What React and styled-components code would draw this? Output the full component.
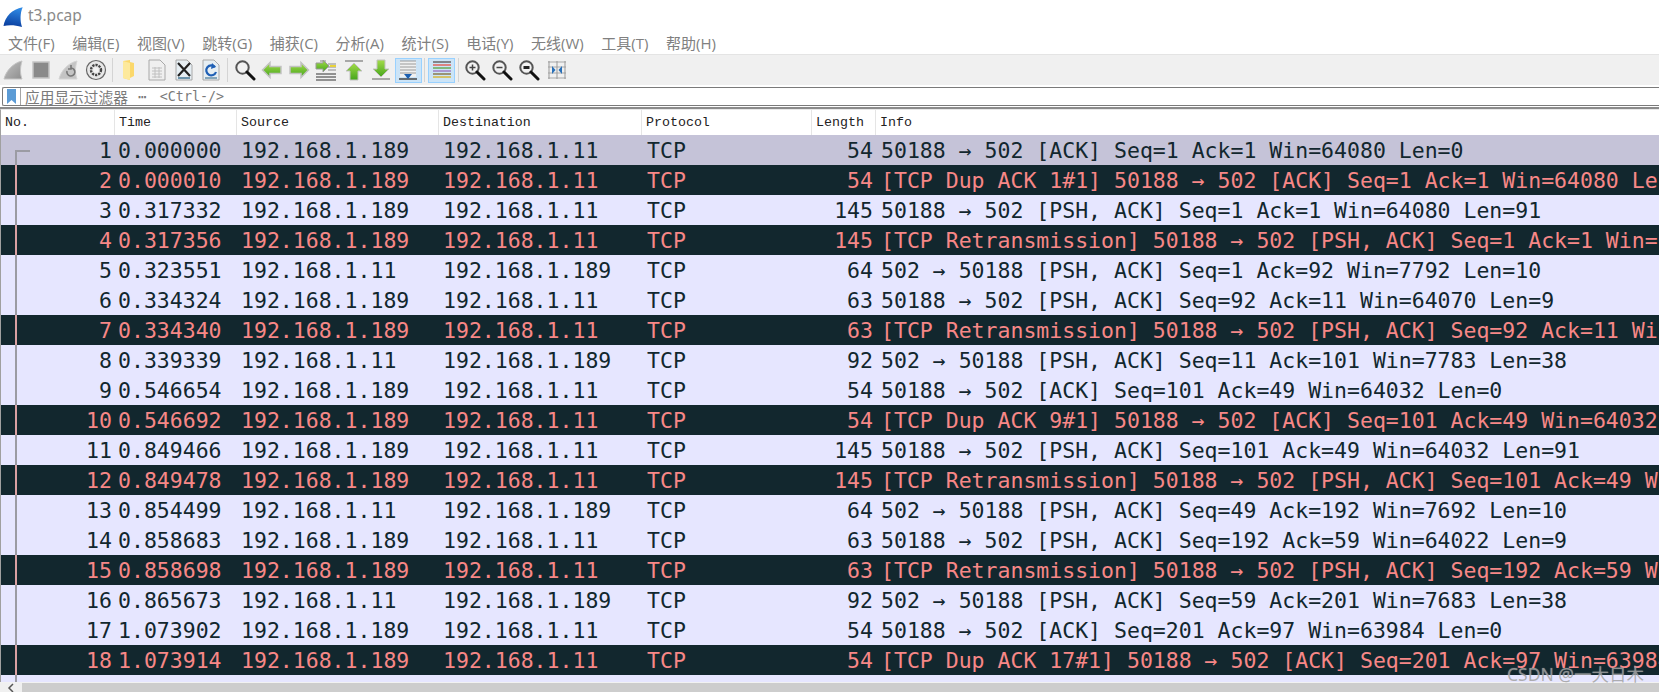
import React from 'react';
import styled, { createGlobalStyle } from 'styled-components';

const GlobalStyle = createGlobalStyle`
  html, body {
    margin: 0;
    height: 100%;
    overflow: hidden;
    background: #fff;
  }
  #root {
    height: 100%;
  }
`;

const Window = styled.div`
  height: 692px;
  display: flex;
  flex-direction: column;
  overflow: hidden;
  font-family: 'Noto Sans', 'Noto Sans CJK SC', sans-serif;
`;
const TitleBar = styled.div`
  height: 30px;
  box-sizing: border-box;
  padding: 0 0 1px 1px;
  display: flex;
  align-items: center;
  gap: 3px;
  font-size: 15.5px;
  color: #8a8a8a;
`;
const MenuBar = styled.div`
  height: 25px;
  box-sizing: border-box;
  display: flex;
  align-items: center;
  gap: 17.6px;
  padding-left: 8px;
  font-size: 15px;
  color: #808080;
  font-family: 'Open Sans', 'Noto Sans CJK SC', sans-serif;
  border-bottom: 1px solid #e4e4e4;
`;
const Toolbar = styled.div`
  height: 30px;
  box-sizing: border-box;
  display: flex;
  align-items: center;
  padding-left: 0.5px;
  background: #f0f0f0;
`;
const ToolButton = styled.div`
  width: 27.3px;
  height: 25px;
  box-sizing: border-box;
  flex: none;
  display: flex;
  align-items: center;
  justify-content: center;
  background: ${(p) => (p.$active ? '#cce4f7' : 'transparent')};
  border: 1px solid ${(p) => (p.$active ? '#99d1ff' : 'transparent')};
`;
const ToolSeparator = styled.div`
  width: 6px;
  height: 24px;
  flex: none;
  display: flex;
  justify-content: center;

  &::before {
    content: '';
    width: 1px;
    background: #d4d4d4;
  }
`;
const FilterBar = styled.div`
  height: 24px;
  box-sizing: border-box;
  padding: 2px 0 1px 2px;
  border-bottom: 2px solid #8b8b8b;
  display: flex;
`;
const FilterInput = styled.div`
  flex: 1;
  display: flex;
  align-items: center;
  border: 1px solid #7a7a7a;
  border-right: none;
  border-radius: 2px 0 0 2px;
  background: #fff;
`;
const FilterFlag = styled.div`
  width: 17px;
  height: 100%;
  display: flex;
  align-items: center;
  justify-content: center;
  border-right: 1px solid #a5a5a5;
`;
const FilterText = styled.div`
  display: flex;
  align-items: center;
  padding-left: 4px;
  font-family: 'DejaVu Sans Mono', 'Noto Sans CJK SC', monospace;
  font-size: 13.3px;
  color: #7a7a7a;
  white-space: pre;
`;
const FilterHint = styled.span`
  font-family: 'Noto Sans CJK SC', sans-serif;
  font-size: 14.7px;
  margin-right: 10px;
`;
const FilterDots = styled.span`
  font-size: 15px;
  margin-right: 13px;
`;
const TableArea = styled.div`
  flex: 1;
  min-height: 0;
  overflow: hidden;
  border-left: 1px solid #a0a0a0;
  border-top: 1px solid #e8e8e8;
`;
const COLUMNS = '114px 122px 202px 203px 170px 64px 1fr';
const HeaderRow = styled.div`
  height: 25px;
  display: grid;
  grid-template-columns: ${COLUMNS};
  background: #fff;
`;
const HeaderCell = styled.div`
  display: flex;
  align-items: center;
  padding-left: 4px;
  font-family: 'Liberation Mono', monospace;
  font-size: 13.3px;
  color: #222;
  border-right: 1px solid #e5e5e5;
  white-space: pre;

  &:last-child {
    border-right: none;
  }
`;
const PacketRow = styled.div`
  height: 30px;
  display: grid;
  grid-template-columns: ${COLUMNS};
  align-items: start;
  background: ${(p) => (p.$kind === 'bad' ? '#12272e' : p.$kind === 'selected' ? '#c5c3d8' : '#e6e6ff')};
  color: ${(p) => (p.$kind === 'bad' ? '#f78787' : '#12272e')};
  font-family: 'DejaVu Sans Mono', monospace;
  font-size: 21.5px;
  line-height: 32px;
  white-space: pre;
`;
const Cell = styled.div`
  min-width: 0;
  overflow: hidden;
  padding-left: ${(p) => p.$pad ?? 3}px;
  padding-right: ${(p) => p.$padRight ?? 0}px;
  text-align: ${(p) => p.$align || 'left'};
`;
const NumberCell = styled(Cell)`
  position: relative;
  height: 30px;
  overflow: visible;
`;
const TreeLine = styled.span`
  position: absolute;
  left: 14px;
  top: ${(p) => (p.$first ? '15px' : '0')};
  bottom: 0;
  width: 2px;
  background: ${(p) => (p.$bad ? '#d9a0a2' : '#9b9ba3')};
`;
const TreeCorner = styled.span`
  position: absolute;
  left: 14px;
  top: 15px;
  width: 15px;
  height: 2px;
  background: #9b9ba3;
`;
const ScrollBar = styled.div`
  height: 10px;
  flex: none;
  display: flex;
  background: #cdcdcd;
  border-top: 1px solid #f2f2f2;
  box-sizing: border-box;
`;
const ScrollArrow = styled.div`
  width: 22px;
  background: #f0f0f0;
  display: flex;
  align-items: flex-start;
  justify-content: center;
`;
const Watermark = styled.div`
  position: absolute;
  left: 1507px;
  top: 661px;
  font-family: 'Noto Sans', 'Noto Sans CJK SC', sans-serif;
  font-size: 17.5px;
  color: rgba(150, 150, 150, 0.75);
  text-shadow: 0 0 1px rgba(255, 255, 255, 0.5);
  white-space: pre;
`;

const Fin = ({ size = 24, id, top, bottom }) => (
  <svg width={size} height={size} viewBox="0 0 24 24">
    <defs>
      <linearGradient id={id} x1="0.6" y1="0" x2="0.4" y2="1">
        <stop offset="0" stopColor={top} />
        <stop offset="1" stopColor={bottom} />
      </linearGradient>
    </defs>
    <path d="M2.5 23C4 14 11 6 21.7 4.3C19 10 19 18 21 24C14 22 8 22 2.5 23Z" fill={`url(#${id})`} />
  </svg>
);

const Icon = ({ children }) => (
  <svg width="22" height="22" viewBox="0 0 22 22">
    {children}
  </svg>
);

const GreenFill = () => (
  <defs>
    <linearGradient id="green" x1="0" y1="0" x2="0" y2="1">
      <stop offset="0" stopColor="#a4dc4a" />
      <stop offset="1" stopColor="#45a51c" />
    </linearGradient>
  </defs>
);

const GrayFin = () => (
  <Icon>
    <defs>
      <linearGradient id="grayFin" x1="0" y1="0" x2="1" y2="1">
        <stop offset="0" stopColor="#c2c2c2" />
        <stop offset="1" stopColor="#8e8e8e" />
      </linearGradient>
    </defs>
    <path d="M1 20C3 12 10 4 19 2C17 8 17 15 19 20Z" fill="url(#grayFin)" stroke="#c4c4c4" />
  </Icon>
);
const StopIcon = () => (
  <Icon>
    <rect x="3" y="3" width="16" height="16" fill="#8a8a8a" stroke="#c4c4c4" strokeWidth="1.5" />
  </Icon>
);
const RestartIcon = () => (
  <Icon>
    <path d="M1 20C3 12 10 4 19 2C17 8 17 15 19 20Z" fill="#c4c4c4" stroke="#d4d4d4" />
    <path d="M9 12a4 4 0 1 0 4 -3M13 6v4h-3" fill="none" stroke="#777" strokeWidth="1.6" />
  </Icon>
);
const OptionsIcon = () => (
  <Icon>
    <circle cx="11" cy="11" r="9.5" fill="#e8e8e8" stroke="#666" strokeWidth="1.2" />
    <circle cx="11" cy="11" r="5" fill="none" stroke="#444" strokeWidth="2.4" strokeDasharray="2.2 1" />
    <circle cx="11" cy="11" r="2.6" fill="#f4f4f4" />
  </Icon>
);
const FolderIcon = () => (
  <Icon>
    <path d="M5 2L12 1V3L16 4V17L12 19V21L5 19Z" fill="#fbd86b" />
    <path d="M5 2L12 4V21L5 19Z" fill="#fde99c" />
  </Icon>
);
const PageShape = ({ fill = '#f5f5f5' }) => (
  <path d="M3 1H14L19 6V21H3Z" fill={fill} stroke="#a8a8a8" />
);
const FileIcon = () => (
  <Icon>
    <PageShape fill="#efefef" />
    <path d="M6 9H16M6 12H16M6 15H16M6 18H16M9 8V19M13 8V19" stroke="#c0c0c0" />
  </Icon>
);
const CloseIcon = () => (
  <Icon>
    <PageShape fill="#e6eef3" />
    <path d="M5 4L17 17M17 4L5 17" stroke="#222" strokeWidth="2.2" />
    <path d="M5 19H17" stroke="#6d94ac" strokeWidth="2" />
  </Icon>
);
const ReloadIcon = () => (
  <Icon>
    <PageShape fill="#e6eef3" />
    <path d="M15 8A5 5 0 1 0 16 13" fill="none" stroke="#1e5fb5" strokeWidth="2.2" />
    <path d="M12 4L16 8L11 10Z" fill="#1e5fb5" />
    <path d="M5 19H17" stroke="#6d94ac" strokeWidth="1.6" />
  </Icon>
);
const Magnifier = ({ children, r = 6.2 }) => (
  <Icon>
    <circle cx="8.5" cy="8.5" r={r} fill="#f2f2f2" stroke="#555" strokeWidth="2" />
    <path d="M13 13L20 20" stroke="#111" strokeWidth="3" strokeLinecap="round" />
    {children}
  </Icon>
);
const ArrowLeft = () => (
  <Icon>
    <GreenFill />
    <path d="M1.5 11L9 3.5V7.5H20V14.5H9V18.5Z" fill="url(#green)" stroke="#c2c2c2" strokeWidth="1.5" />
  </Icon>
);
const ArrowRight = () => (
  <Icon>
    <GreenFill />
    <path d="M20.5 11L13 3.5V7.5H2V14.5H13V18.5Z" fill="url(#green)" stroke="#c2c2c2" strokeWidth="1.5" />
  </Icon>
);
const GotoIcon = () => (
  <Icon>
    <GreenFill />
    <path d="M1 15H21M1 18H21M1 21H21" stroke="#333" />
    <path d="M11 2L5 2M13 5H21M13 8H21M13 11H21" stroke="#8a8a8a" />
    <path d="M14 7L8 1V4H1V10H8V13Z" fill="url(#green)" stroke="#9a9a9a" />
    <path d="M15 7H21" stroke="#e8d23a" strokeWidth="2" />
  </Icon>
);
const TopIcon = () => (
  <Icon>
    <GreenFill />
    <path d="M2 2H20" stroke="#a8a8a8" strokeWidth="2" />
    <path d="M11 4L19 12H15V21H7V12H3Z" fill="url(#green)" stroke="#c2c2c2" />
  </Icon>
);
const BottomIcon = () => (
  <Icon>
    <GreenFill />
    <path d="M2 20H20" stroke="#a8a8a8" strokeWidth="2" />
    <path d="M11 18L19 10H15V1H7V10H3Z" fill="url(#green)" stroke="#c2c2c2" />
  </Icon>
);
const AutoScrollIcon = () => (
  <Icon>
    <path d="M3 2H19V18H3Z" fill="#f0f0f0" />
    <path d="M3 2H19M3 5H19M3 8H19M3 11H19M3 14H19" stroke="#9a9a9a" />
    <path d="M2 20H20" stroke="#444" strokeWidth="1.5" />
    <path d="M7 15H15L11 20Z" fill="#1c5fb0" />
  </Icon>
);
const ColorizeIcon = () => (
  <Icon>
    <path d="M2 3H20" stroke="#666" strokeWidth="1.5" />
    <path d="M2 6H20" stroke="#e0635a" strokeWidth="1.5" />
    <path d="M2 9H20" stroke="#6aaa56" strokeWidth="1.5" />
    <path d="M2 12H20" stroke="#9f7fc5" strokeWidth="1.5" />
    <path d="M2 15H20" stroke="#8a7a4c" strokeWidth="1.5" />
    <path d="M2 18H20" stroke="#d9b73c" strokeWidth="1.5" />
  </Icon>
);
const ResizeIcon = () => (
  <Icon>
    <path d="M2 3H20M2 19H20M2 8H20M2 14H20" stroke="#a8a8a8" />
    <path d="M3 2V20M19 2V20M11 2V20" stroke="#999" />
    <path d="M9.5 11L6 7V15ZM12.5 11L16 7V15Z" fill="#2a70b8" />
  </Icon>
);
const FlagIcon = () => (
  <svg width="11" height="15" viewBox="0 0 11 15">
    <path d="M1 0H10V15L5.5 11L1 15Z" fill="#5b9bd5" />
  </svg>
);

const MENUS = ['文件(F)', '编辑(E)', '视图(V)', '跳转(G)', '捕获(C)', '分析(A)', '统计(S)', '电话(Y)', '无线(W)', '工具(T)', '帮助(H)'];

const SRC = '192.168.1.189';
const DST = '192.168.1.11';
const PACKETS = [
  [1, '0.000000', SRC, DST, 54, '50188 → 502 [ACK] Seq=1 Ack=1 Win=64080 Len=0', 'selected'],
  [2, '0.000010', SRC, DST, 54, '[TCP Dup ACK 1#1] 50188 → 502 [ACK] Seq=1 Ack=1 Win=64080 Len=0', 'bad'],
  [3, '0.317332', SRC, DST, 145, '50188 → 502 [PSH, ACK] Seq=1 Ack=1 Win=64080 Len=91'],
  [4, '0.317356', SRC, DST, 145, '[TCP Retransmission] 50188 → 502 [PSH, ACK] Seq=1 Ack=1 Win=64080 Len=91', 'bad'],
  [5, '0.323551', DST, SRC, 64, '502 → 50188 [PSH, ACK] Seq=1 Ack=92 Win=7792 Len=10'],
  [6, '0.334324', SRC, DST, 63, '50188 → 502 [PSH, ACK] Seq=92 Ack=11 Win=64070 Len=9'],
  [7, '0.334340', SRC, DST, 63, '[TCP Retransmission] 50188 → 502 [PSH, ACK] Seq=92 Ack=11 Win=64070 Len=9', 'bad'],
  [8, '0.339339', DST, SRC, 92, '502 → 50188 [PSH, ACK] Seq=11 Ack=101 Win=7783 Len=38'],
  [9, '0.546654', SRC, DST, 54, '50188 → 502 [ACK] Seq=101 Ack=49 Win=64032 Len=0'],
  [10, '0.546692', SRC, DST, 54, '[TCP Dup ACK 9#1] 50188 → 502 [ACK] Seq=101 Ack=49 Win=64032 Len=0', 'bad'],
  [11, '0.849466', SRC, DST, 145, '50188 → 502 [PSH, ACK] Seq=101 Ack=49 Win=64032 Len=91'],
  [12, '0.849478', SRC, DST, 145, '[TCP Retransmission] 50188 → 502 [PSH, ACK] Seq=101 Ack=49 Win=64032 Len=91', 'bad'],
  [13, '0.854499', DST, SRC, 64, '502 → 50188 [PSH, ACK] Seq=49 Ack=192 Win=7692 Len=10'],
  [14, '0.858683', SRC, DST, 63, '50188 → 502 [PSH, ACK] Seq=192 Ack=59 Win=64022 Len=9'],
  [15, '0.858698', SRC, DST, 63, '[TCP Retransmission] 50188 → 502 [PSH, ACK] Seq=192 Ack=59 Win=64022 Len=9', 'bad'],
  [16, '0.865673', DST, SRC, 92, '502 → 50188 [PSH, ACK] Seq=59 Ack=201 Win=7683 Len=38'],
  [17, '1.073902', SRC, DST, 54, '50188 → 502 [ACK] Seq=201 Ack=97 Win=63984 Len=0'],
  [18, '1.073914', SRC, DST, 54, '[TCP Dup ACK 17#1] 50188 → 502 [ACK] Seq=201 Ack=97 Win=63984 Len=0', 'bad'],
  [19, '', '', '', '', '50188 → 502 [PSH, ACK] Seq=201 Ack=97 Win=63984 Len=91'],
];

const App = () => {
  return (
    <Window>
      <GlobalStyle />
      <TitleBar>
        <Fin id="titleFin" top="#2f8be6" bottom="#0a3d9e" />
        t3.pcap
      </TitleBar>
      <MenuBar>
        {MENUS.map((m) => (
          <span key={m}>{m}</span>
        ))}
      </MenuBar>
      <Toolbar>
        <ToolButton><GrayFin /></ToolButton>
        <ToolButton><StopIcon /></ToolButton>
        <ToolButton><RestartIcon /></ToolButton>
        <ToolButton><OptionsIcon /></ToolButton>
        <ToolSeparator />
        <ToolButton><FolderIcon /></ToolButton>
        <ToolButton><FileIcon /></ToolButton>
        <ToolButton><CloseIcon /></ToolButton>
        <ToolButton><ReloadIcon /></ToolButton>
        <ToolSeparator />
        <ToolButton><Magnifier /></ToolButton>
        <ToolButton><ArrowLeft /></ToolButton>
        <ToolButton><ArrowRight /></ToolButton>
        <ToolButton><GotoIcon /></ToolButton>
        <ToolButton><TopIcon /></ToolButton>
        <ToolButton><BottomIcon /></ToolButton>
        <ToolButton $active><AutoScrollIcon /></ToolButton>
        <ToolSeparator />
        <ToolButton $active><ColorizeIcon /></ToolButton>
        <ToolSeparator />
        <ToolButton>
          <Magnifier><path d="M5.5 8.5H11.5M8.5 5.5V11.5" stroke="#444" strokeWidth="1.5" /></Magnifier>
        </ToolButton>
        <ToolButton>
          <Magnifier><path d="M5.5 8.5H11.5" stroke="#444" strokeWidth="1.5" /></Magnifier>
        </ToolButton>
        <ToolButton>
          <Magnifier><path d="M5.5 8.5H11.5" stroke="#222" strokeWidth="3" /></Magnifier>
        </ToolButton>
        <ToolButton><ResizeIcon /></ToolButton>
      </Toolbar>
      <FilterBar>
        <FilterInput>
          <FilterFlag><FlagIcon /></FilterFlag>
          <FilterText>
            <FilterHint>应用显示过滤器</FilterHint>
            <FilterDots>⋯</FilterDots>
            {'<Ctrl-/>'}
          </FilterText>
        </FilterInput>
      </FilterBar>
      <TableArea>
        <HeaderRow>
          <HeaderCell>No.</HeaderCell>
          <HeaderCell>Time</HeaderCell>
          <HeaderCell>Source</HeaderCell>
          <HeaderCell>Destination</HeaderCell>
          <HeaderCell>Protocol</HeaderCell>
          <HeaderCell>Length</HeaderCell>
          <HeaderCell>Info</HeaderCell>
        </HeaderRow>
        {PACKETS.map(([no, time, src, dst, len, info, kind]) => (
          <PacketRow key={no} $kind={kind}>
            <NumberCell $align="right" $padRight={3}>
              <TreeLine $first={no === 1} $bad={kind === 'bad'} />
              {no === 1 && <TreeCorner />}
              {no < 19 && no}
            </NumberCell>
            <Cell>{time}</Cell>
            <Cell $pad={4}>{src}</Cell>
            <Cell $pad={4}>{dst}</Cell>
            <Cell $pad={5}>{no < 19 ? 'TCP' : ''}</Cell>
            <Cell $align="right" $pad={0} $padRight={3}>{len}</Cell>
            <Cell $pad={5}>{info}</Cell>
          </PacketRow>
        ))}
      </TableArea>
      <ScrollBar>
        <ScrollArrow>
          <svg width="8" height="9" viewBox="0 0 8 9">
            <path d="M6 1L2 5L6 9" fill="none" stroke="#555" strokeWidth="1.5" />
          </svg>
        </ScrollArrow>
      </ScrollBar>
      <Watermark>CSDN @一大日木</Watermark>
    </Window>
  );
};

export default App;
